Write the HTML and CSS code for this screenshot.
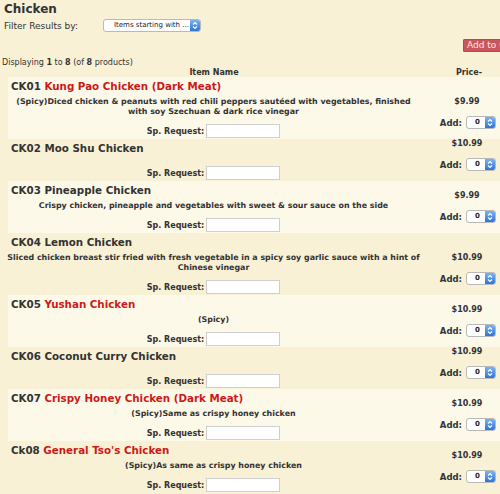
FILE: index.html
```html
<!DOCTYPE html>
<html lang="en">

<head>
    <meta charset="UTF-8">
    <title>Chicken</title>
    <link rel="stylesheet" href="styles.css">
</head>

<body>
    <div class="page">
        <h1 class="category">Chicken</h1>

        <div class="filter">
            <span class="filter-label">Filter Results by:</span>
            <span class="select select-wide">
                <span class="select-text">Items starting with ...</span>
                <span class="stepper"><svg width="6" height="9" viewBox="0 0 6 9"><path d="M1 3.5L3 1.5L5 3.5M1 5.5L3 7.5L5 5.5" fill="none" stroke="#fff" stroke-width="1.1"/></svg></span>
            </span>
        </div>

        <div class="actions">
            <button class="add-cart">Add to Cart</button>
        </div>

        <div class="count">Displaying <b>1</b> to <b>8</b> (of <b>8</b> products)</div>

        <div class="list-head">
            <div class="col-left head-name">Item Name</div>
            <div class="head-price">Price-</div>
        </div>

        <div class="items">
            <div class="item">
                <div class="col-left">
                    <div class="item-title">CK01 <span class="hot">Kung Pao Chicken (Dark Meat)</span></div>
                    <div class="desc">(Spicy)Diced chicken &amp; peanuts with red chili peppers sautéed with vegetables, finished<br>with soy Szechuan &amp; dark rice vinegar</div>
                    <div class="request">Sp. Request:<input type="text" class="request-input"></div>
                </div>
                <div class="col-right">
                    <div class="price">$9.99</div>
                    <div class="add">Add: <span class="select"><span class="select-text">0</span><span class="stepper"><svg width="6" height="9" viewBox="0 0 6 9"><path d="M1 3.5L3 1.5L5 3.5M1 5.5L3 7.5L5 5.5" fill="none" stroke="#fff" stroke-width="1.1"/></svg></span></span></div>
                </div>
            </div>

            <div class="item">
                <div class="col-left">
                    <div class="item-title">CK02 Moo Shu Chicken</div>
                    <div class="desc"></div>
                    <div class="request">Sp. Request:<input type="text" class="request-input"></div>
                </div>
                <div class="col-right">
                    <div class="price">$10.99</div>
                    <div class="add">Add: <span class="select"><span class="select-text">0</span><span class="stepper"><svg width="6" height="9" viewBox="0 0 6 9"><path d="M1 3.5L3 1.5L5 3.5M1 5.5L3 7.5L5 5.5" fill="none" stroke="#fff" stroke-width="1.1"/></svg></span></span></div>
                </div>
            </div>

            <div class="item">
                <div class="col-left">
                    <div class="item-title">CK03 Pineapple Chicken</div>
                    <div class="desc">Crispy chicken, pineapple and vegetables with sweet &amp; sour sauce on the side</div>
                    <div class="request">Sp. Request:<input type="text" class="request-input"></div>
                </div>
                <div class="col-right">
                    <div class="price">$9.99</div>
                    <div class="add">Add: <span class="select"><span class="select-text">0</span><span class="stepper"><svg width="6" height="9" viewBox="0 0 6 9"><path d="M1 3.5L3 1.5L5 3.5M1 5.5L3 7.5L5 5.5" fill="none" stroke="#fff" stroke-width="1.1"/></svg></span></span></div>
                </div>
            </div>

            <div class="item">
                <div class="col-left">
                    <div class="item-title">CK04 Lemon Chicken</div>
                    <div class="desc">Sliced chicken breast stir fried with fresh vegetable in a spicy soy garlic sauce with a hint of<br>Chinese vinegar</div>
                    <div class="request">Sp. Request:<input type="text" class="request-input"></div>
                </div>
                <div class="col-right">
                    <div class="price">$10.99</div>
                    <div class="add">Add: <span class="select"><span class="select-text">0</span><span class="stepper"><svg width="6" height="9" viewBox="0 0 6 9"><path d="M1 3.5L3 1.5L5 3.5M1 5.5L3 7.5L5 5.5" fill="none" stroke="#fff" stroke-width="1.1"/></svg></span></span></div>
                </div>
            </div>

            <div class="item">
                <div class="col-left">
                    <div class="item-title">CK05 <span class="hot">Yushan Chicken</span></div>
                    <div class="desc">(Spicy)</div>
                    <div class="request">Sp. Request:<input type="text" class="request-input"></div>
                </div>
                <div class="col-right">
                    <div class="price">$10.99</div>
                    <div class="add">Add: <span class="select"><span class="select-text">0</span><span class="stepper"><svg width="6" height="9" viewBox="0 0 6 9"><path d="M1 3.5L3 1.5L5 3.5M1 5.5L3 7.5L5 5.5" fill="none" stroke="#fff" stroke-width="1.1"/></svg></span></span></div>
                </div>
            </div>

            <div class="item">
                <div class="col-left">
                    <div class="item-title">CK06 Coconut Curry Chicken</div>
                    <div class="desc"></div>
                    <div class="request">Sp. Request:<input type="text" class="request-input"></div>
                </div>
                <div class="col-right">
                    <div class="price">$10.99</div>
                    <div class="add">Add: <span class="select"><span class="select-text">0</span><span class="stepper"><svg width="6" height="9" viewBox="0 0 6 9"><path d="M1 3.5L3 1.5L5 3.5M1 5.5L3 7.5L5 5.5" fill="none" stroke="#fff" stroke-width="1.1"/></svg></span></span></div>
                </div>
            </div>

            <div class="item">
                <div class="col-left">
                    <div class="item-title">CK07 <span class="hot">Crispy Honey Chicken (Dark Meat)</span></div>
                    <div class="desc">(Spicy)Same as crispy honey chicken</div>
                    <div class="request">Sp. Request:<input type="text" class="request-input"></div>
                </div>
                <div class="col-right">
                    <div class="price">$10.99</div>
                    <div class="add">Add: <span class="select"><span class="select-text">0</span><span class="stepper"><svg width="6" height="9" viewBox="0 0 6 9"><path d="M1 3.5L3 1.5L5 3.5M1 5.5L3 7.5L5 5.5" fill="none" stroke="#fff" stroke-width="1.1"/></svg></span></span></div>
                </div>
            </div>

            <div class="item">
                <div class="col-left">
                    <div class="item-title">Ck08 <span class="hot">General Tso's Chicken</span></div>
                    <div class="desc">(Spicy)As same as crispy honey chicken</div>
                    <div class="request">Sp. Request:<input type="text" class="request-input"></div>
                </div>
                <div class="col-right">
                    <div class="price">$10.99</div>
                    <div class="add">Add: <span class="select"><span class="select-text">0</span><span class="stepper"><svg width="6" height="9" viewBox="0 0 6 9"><path d="M1 3.5L3 1.5L5 3.5M1 5.5L3 7.5L5 5.5" fill="none" stroke="#fff" stroke-width="1.1"/></svg></span></span></div>
                </div>
            </div>
        </div>
    </div>
</body>

</html>
```

FILE: styles.css
```css
html,
body {
    margin: 0;
    overflow: hidden;
}

body {
    font-family: "DejaVu Sans", Verdana, sans-serif;
    color: #333;
    background: #f8f1d6;
}

.page {
    width: 500px;
}

.category {
    margin: 0;
    padding: 1px 4px 0;
    font-size: 12px;
    line-height: 17px;
}

.filter {
    display: flex;
    align-items: center;
    height: 13px;
    margin-top: 1px;
    padding-left: 4px;
    font-size: 9px;
}

.filter-label {
    width: 99px;
}

.select {
    display: inline-flex;
    align-items: stretch;
    height: 13px;
    box-sizing: border-box;
    background: #fff;
    border: 1px solid #b9b9b9;
    border-radius: 3px;
    vertical-align: middle;
    overflow: hidden;
}

.select-wide {
    width: 98px;
}

.select-text {
    flex: 1;
    padding-left: 8px;
    font-size: 7px;
    line-height: 11px;
    color: #222;
}

.select-wide .select-text {
    padding-left: 10px;
}

.stepper {
    display: flex;
    align-items: center;
    justify-content: center;
    width: 10px;
    background: linear-gradient(#7bb3f0, #2e74d6);
}

/* the cart button runs past the right edge of the window */
.actions {
    display: flex;
    margin-top: 7px;
    padding-left: 463px;
    height: 13px;
    overflow: hidden;
    white-space: nowrap;
}

.add-cart {
    flex-shrink: 0;
    height: 13px;
    margin: 0;
    padding: 0 3px;
    font-family: inherit;
    font-size: 9px;
    line-height: 11px;
    color: #fbe9ea;
    background: #cb555d;
    border: 1px solid #b84650;
    border-radius: 1px;
}

.count {
    margin-top: 6px;
    padding-left: 2px;
    font-size: 8px;
    line-height: 9px;
}

.list-head {
    display: flex;
    margin: 1px 0 0 8px;
    font-size: 8px;
    font-weight: bold;
    line-height: 9px;
}

.col-left {
    width: 418px;
}

.head-name {
    box-sizing: border-box;
    padding-right: 6px;
    text-align: center;
}

.head-price {
    padding-left: 30px;
}

.item {
    display: flex;
    margin-left: 8px;
    padding: 2px 0 1px;
}

.item:nth-child(odd) {
    background: #fdf9e9;
}

.item-title {
    padding-left: 3px;
    font-size: 10.3px;
    font-weight: bold;
    line-height: 15px;
    white-space: nowrap;
}

.hot {
    color: #cc1a1a;
}

.desc {
    margin: 0 -1px 0 -8px;
    padding-top: 3px;
    font-size: 7.9px;
    font-weight: bold;
    line-height: 10px;
    text-align: center;
    white-space: nowrap;
}

.request {
    display: flex;
    align-items: center;
    justify-content: center;
    gap: 2px;
    height: 14px;
    margin: 7px -1px 0 -8px;
    font-size: 8px;
    font-weight: bold;
}

.request-input {
    width: 74px;
    height: 14px;
    box-sizing: border-box;
    margin: 0;
    padding: 0;
    background: #fff;
    border: 1px solid #cfcfcf;
}

/* price block sits on the row bottom and may reach above a short row */
.col-right {
    width: 74px;
    align-self: flex-end;
    margin-top: -12px;
    padding-bottom: 9px;
}

.price {
    padding-left: 8px;
    font-size: 8px;
    font-weight: bold;
    line-height: 12px;
    text-align: center;
}

.add {
    display: flex;
    align-items: center;
    justify-content: flex-end;
    gap: 4px;
    height: 13px;
    margin-top: 8px;
    padding-right: 4px;
    font-size: 8.5px;
    font-weight: bold;
}

.add .select {
    width: 30px;
}
```
